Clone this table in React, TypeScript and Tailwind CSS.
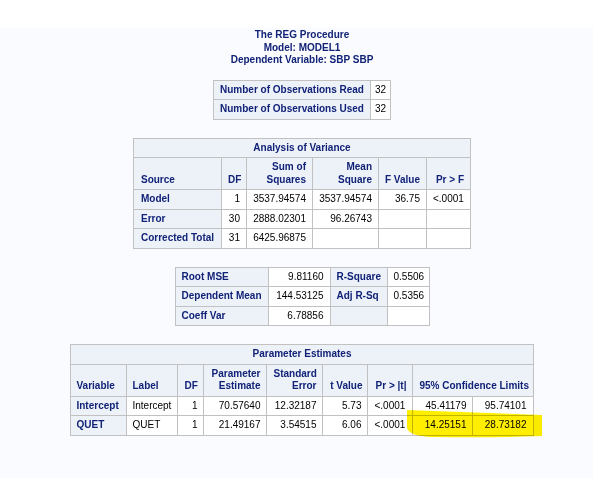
const th = "border border-[#c1c1c1] bg-[#edf2f9] text-[#112277] font-bold px-[6px] py-[3px] align-bottom whitespace-nowrap";
const td = "border border-[#c1c1c1] bg-white text-black px-[6px] py-[3px] text-right whitespace-nowrap";
const rh = "border border-[#c1c1c1] bg-[#edf2f9] text-[#112277] font-bold px-[6px] py-[3px] text-left whitespace-nowrap";

const anova = [
  ["Model", "1", "3537.94574", "3537.94574", "36.75", "<.0001"],
  ["Error", "30", "2888.02301", "96.26743", "", ""],
  ["Corrected Total", "31", "6425.96875", "", "", ""],
];

export default function App() {
  return (
    <div
      className="min-h-[478px] w-[593px] bg-[#fafbfe] text-[10px] leading-[12.5px]"
      style={{ fontFamily: '"Liberation Sans", Arial, sans-serif' }}
    >
      <div className="h-[28px] bg-white" />
      <div className="flex flex-col items-center pl-[11px]">
        <div className="mt-[1px] flex flex-col items-center font-bold text-[#112277]">
          <div>The REG Procedure</div>
          <div>Model: MODEL1</div>
          <div>Dependent Variable: SBP SBP</div>
        </div>

        <table className="mt-[13px] border-collapse border border-[#c1c1c1] table-fixed w-[177px]">
          <colgroup>
            <col className="w-[157px]" />
            <col className="w-[20px]" />
          </colgroup>
          <tbody>
            <tr>
              <td className={rh}>Number of Observations Read</td>
              <td className={td + " !px-[4px]"}>32</td>
            </tr>
            <tr>
              <td className={rh}>Number of Observations Used</td>
              <td className={td + " !px-[4px]"}>32</td>
            </tr>
          </tbody>
        </table>

        <table className="mt-[18px] border-collapse border border-[#c1c1c1] table-fixed w-[337px]">
          <colgroup>
            <col className="w-[88px]" />
            <col className="w-[25px]" />
            <col className="w-[66px]" />
            <col className="w-[66px]" />
            <col className="w-[48px]" />
            <col className="w-[44px]" />
          </colgroup>
          <thead>
            <tr>
              <th colSpan={6} className={th + " text-center"}>Analysis of Variance</th>
            </tr>
            <tr>
              <th className={th + " text-left !pl-[7px]"}>Source</th>
              <th className={th + " text-right"}>DF</th>
              <th className={th + " text-right"}>Sum of<br />Squares</th>
              <th className={th + " text-right"}>Mean<br />Square</th>
              <th className={th + " text-right"}>F Value</th>
              <th className={th + " text-right"}>Pr &gt; F</th>
            </tr>
          </thead>
          <tbody>
            {anova.map((r) => (
              <tr key={r[0]}>
                <td className={rh + " !pl-[7px]"}>{r[0]}</td>
                <td className={td}>{r[1]}</td>
                <td className={td}>{r[2]}</td>
                <td className={td}>{r[3]}</td>
                <td className={td}>{r[4]}</td>
                <td className={td + " !text-left"}>{r[5] || "\u00a0"}</td>
              </tr>
            ))}
          </tbody>
        </table>

        <table className="mt-[18px] border-collapse border border-[#c1c1c1] table-fixed w-[254px]">
          <colgroup>
            <col className="w-[93px]" />
            <col className="w-[62px]" />
            <col className="w-[57px]" />
            <col className="w-[42px]" />
          </colgroup>
          <tbody>
            <tr>
              <td className={rh}>Root MSE</td>
              <td className={td}>9.81160</td>
              <td className={rh}>R-Square</td>
              <td className={td}>0.5506</td>
            </tr>
            <tr>
              <td className={rh}>Dependent Mean</td>
              <td className={td}>144.53125</td>
              <td className={rh}>Adj R-Sq</td>
              <td className={td}>0.5356</td>
            </tr>
            <tr>
              <td className={rh}>Coeff Var</td>
              <td className={td}>6.78856</td>
              <td className={rh}>&nbsp;</td>
              <td className={td}>&nbsp;</td>
            </tr>
          </tbody>
        </table>

        <div className="relative mt-[18px]">
          <table className="border-collapse border border-[#c1c1c1] table-fixed w-[462px]">
            <colgroup>
              <col className="w-[56px]" />
              <col className="w-[51px]" />
              <col className="w-[26px]" />
              <col className="w-[63px]" />
              <col className="w-[56px]" />
              <col className="w-[45px]" />
              <col className="w-[45px]" />
              <col className="w-[60px]" />
              <col className="w-[60px]" />
            </colgroup>
            <thead>
              <tr>
                <th colSpan={9} className={th + " text-center"}>Parameter Estimates</th>
              </tr>
              <tr>
                <th className={th + " text-left !px-[5px]"}>Variable</th>
                <th className={th + " text-left !px-[5px]"}>Label</th>
                <th className={th + " text-right"}>DF</th>
                <th className={th + " text-right"}>Parameter<br />Estimate</th>
                <th className={th + " text-right"}>Standard<br />Error</th>
                <th className={th + " text-right !px-[5px]"}>t Value</th>
                <th className={th + " text-right"}>Pr &gt; |t|</th>
                <th colSpan={2} className={th + " text-center"}>95% Confidence Limits</th>
              </tr>
            </thead>
            <tbody>
              <tr>
                <td className={rh + " !px-[5px]"}>Intercept</td>
                <td className={td + " !text-left !px-[5px]"}>Intercept</td>
                <td className={td}>1</td>
                <td className={td}>70.57640</td>
                <td className={td}>12.32187</td>
                <td className={td}>5.73</td>
                <td className={td + " !text-left"}>&lt;.0001</td>
                <td className={td}>45.41179</td>
                <td className={td}>95.74101</td>
              </tr>
              <tr>
                <td className={rh + " !px-[5px]"}>QUET</td>
                <td className={td + " !text-left !px-[5px]"}>QUET</td>
                <td className={td}>1</td>
                <td className={td}>21.49167</td>
                <td className={td}>3.54515</td>
                <td className={td}>6.06</td>
                <td className={td + " !text-left"}>&lt;.0001</td>
                <td className={td}>14.25151</td>
                <td className={td}>28.73182</td>
              </tr>
            </tbody>
          </table>
          <svg
            className="pointer-events-none absolute left-0 top-0 mix-blend-multiply"
            width="480"
            height="100"
            viewBox="0 0 480 100"
          >
            <path d="M337 66 L472 71 L472 92 Q420 94 362 93 Q339 92 337 84 Z" fill="#ffee00" />
          </svg>
        </div>
      </div>
    </div>
  );
}
